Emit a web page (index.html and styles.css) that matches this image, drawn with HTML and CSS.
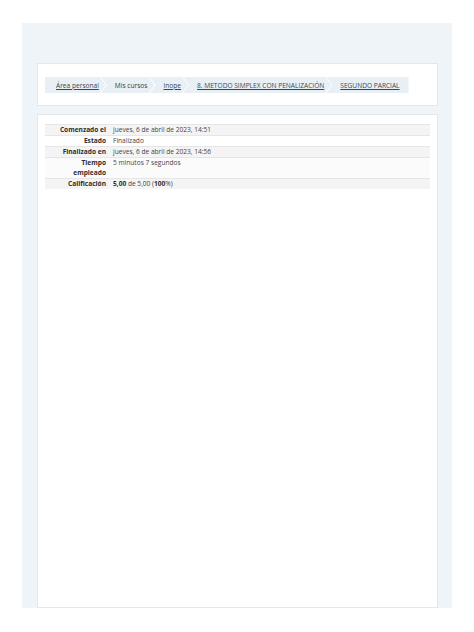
FILE: index.html
```html
<!DOCTYPE html>
<html lang="es">
<head>
<meta charset="utf-8">
<title>Revisión del intento</title>
<link rel="stylesheet" href="styles.css">
</head>
<body>
<div class="page">
  <div class="card crumbs-card">
    <ol class="crumbs">
      <li class="crumb first"><a href="#">Área personal</a></li>
      <li class="crumb"><span>Mis cursos</span></li>
      <li class="crumb"><a href="#">Inope</a></li>
      <li class="crumb"><a href="#">8. METODO SIMPLEX CON PENALIZACIÓN</a></li>
      <li class="crumb"><a href="#">SEGUNDO PARCIAL</a></li>
    </ol>
  </div>
  <div class="card main-card">
    <table class="summary">
      <colgroup><col class="label-col"><col></colgroup>
      <tr class="odd"><th>Comenzado el</th><td>jueves, 6 de abril de 2023, 14:51</td></tr>
      <tr><th>Estado</th><td>Finalizado</td></tr>
      <tr class="odd"><th>Finalizado en</th><td>jueves, 6 de abril de 2023, 14:56</td></tr>
      <tr class="faint"><th>Tiempo empleado</th><td>5 minutos 7 segundos</td></tr>
      <tr class="odd"><th>Calificación</th><td><b>5,00</b> de 5,00 (<b>100</b>%)</td></tr>
    </table>
  </div>
</div>
</body>
</html>
```
FILE: styles.css
```css
html, body {
  margin: 0;
  padding: 0;
  background: #ffffff;
}
body {
  font-family: "Open Sans", "Liberation Sans", sans-serif;
  color: #3a3a3a;
}
.page {
  margin: 23px 22px 0 22px;
  height: 585px;
  box-sizing: border-box;
  background: #eef4f8;
  padding: 40px 14px 0 15px;
  display: flex;
  flex-direction: column;
  gap: 8px;
}
.card {
  background: #ffffff;
  border: 1px solid #e2e8ec;
}
.crumbs-card {
  height: 43px;
  box-sizing: border-box;
  padding: 13px 7px;
}
.crumbs {
  list-style: none;
  margin: 0;
  padding: 0;
  display: flex;
  height: 16px;
}
.crumb {
  background: #e9f0f5;
  height: 16px;
  display: flex;
  align-items: center;
  font-size: 6.6px;
  padding: 0 7px 0 14px;
  margin-left: -5px;
  clip-path: polygon(0 0, calc(100% - 6px) 0, 100% 50%, calc(100% - 6px) 100%, 0 100%, 6px 50%);
}
.crumb.first {
  margin-left: 0;
  padding-left: 11px;
  clip-path: polygon(0 0, calc(100% - 6px) 0, 100% 50%, calc(100% - 6px) 100%, 0 100%);
}
.crumb:last-child {
  padding-right: 9px;
  clip-path: polygon(0 0, 100% 0, 100% 100%, 0 100%, 6px 50%);
}
.crumb a {
  color: #3a4650;
  text-decoration: underline;
}
.crumb span {
  color: #3a3a3a;
}
.main-card {
  flex: 1;
  padding: 9px 7px;
}
.summary {
  width: 100%;
  border-collapse: collapse;
  table-layout: fixed;
  font-size: 6.6px;
}
.label-col {
  width: 67px;
}
.summary tr {
  border-top: 1px solid #e6e6e6;
}
.summary tr.odd {
  background: #f4f4f4;
}
.summary tr.faint {
  background: #fbfbfb;
}
.summary th {
  text-align: right;
  font-weight: 700;
  color: #2e2e2e;
  padding: 0 6px 0 12px;
  line-height: 10px;
  vertical-align: top;
}
.summary td {
  padding: 0 0 0 1px;
  line-height: 10px;
  color: #454545;
  vertical-align: top;
}
.summary td b {
  font-weight: 700;
  color: #2e2e2e;
}
```
